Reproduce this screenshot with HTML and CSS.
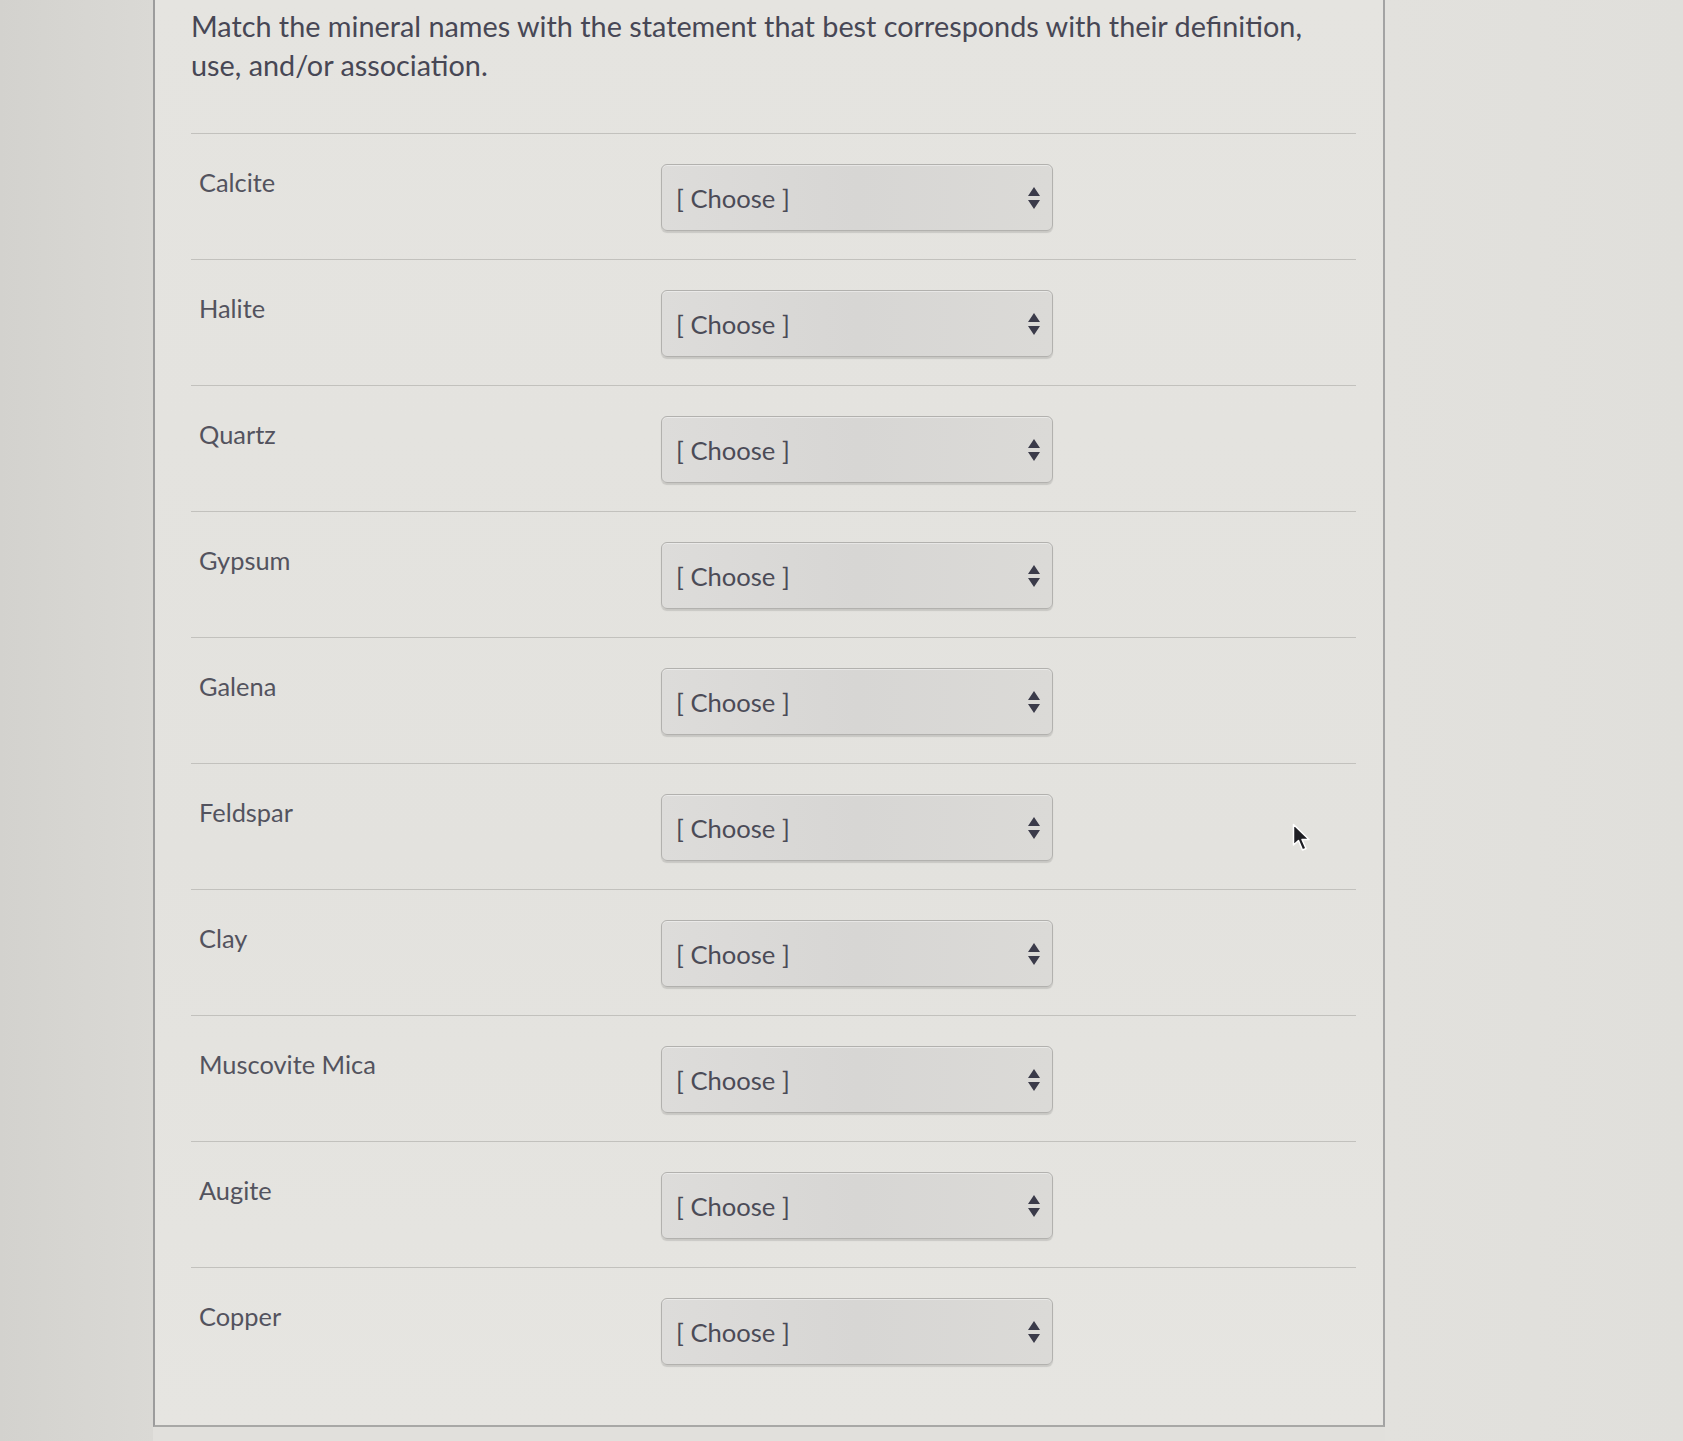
FILE: index.html
```html
<!DOCTYPE html>
<html lang="en">

<head>
    <meta charset="UTF-8">
    <meta name="viewport" content="width=device-width, initial-scale=1.0">
    <title>Matching Question</title>
    <link rel="stylesheet" href="styles.css">
</head>

<body>
    <div class="page">
        <div class="gutter"></div>

        <div class="question">
            <p class="question-text">Match the mineral names with the statement that best corresponds with their definition, use, and/or association.</p>

            <div class="answers">
                <div class="answer-row">
                    <div class="answer-label">Calcite</div>
                    <div class="choose">
                        <span>[ Choose ]</span>
                        <svg class="arrows" width="12" height="22" viewBox="0 0 12 22"><path d="M6 0 L12 9 L0 9 Z M0 13 L12 13 L6 22 Z" /></svg>
                    </div>
                </div>
                <div class="answer-row">
                    <div class="answer-label">Halite</div>
                    <div class="choose">
                        <span>[ Choose ]</span>
                        <svg class="arrows" width="12" height="22" viewBox="0 0 12 22"><path d="M6 0 L12 9 L0 9 Z M0 13 L12 13 L6 22 Z" /></svg>
                    </div>
                </div>
                <div class="answer-row">
                    <div class="answer-label">Quartz</div>
                    <div class="choose">
                        <span>[ Choose ]</span>
                        <svg class="arrows" width="12" height="22" viewBox="0 0 12 22"><path d="M6 0 L12 9 L0 9 Z M0 13 L12 13 L6 22 Z" /></svg>
                    </div>
                </div>
                <div class="answer-row">
                    <div class="answer-label">Gypsum</div>
                    <div class="choose">
                        <span>[ Choose ]</span>
                        <svg class="arrows" width="12" height="22" viewBox="0 0 12 22"><path d="M6 0 L12 9 L0 9 Z M0 13 L12 13 L6 22 Z" /></svg>
                    </div>
                </div>
                <div class="answer-row">
                    <div class="answer-label">Galena</div>
                    <div class="choose">
                        <span>[ Choose ]</span>
                        <svg class="arrows" width="12" height="22" viewBox="0 0 12 22"><path d="M6 0 L12 9 L0 9 Z M0 13 L12 13 L6 22 Z" /></svg>
                    </div>
                </div>
                <div class="answer-row">
                    <div class="answer-label">Feldspar</div>
                    <div class="choose">
                        <span>[ Choose ]</span>
                        <svg class="arrows" width="12" height="22" viewBox="0 0 12 22"><path d="M6 0 L12 9 L0 9 Z M0 13 L12 13 L6 22 Z" /></svg>
                    </div>
                </div>
                <div class="answer-row">
                    <div class="answer-label">Clay</div>
                    <div class="choose">
                        <span>[ Choose ]</span>
                        <svg class="arrows" width="12" height="22" viewBox="0 0 12 22"><path d="M6 0 L12 9 L0 9 Z M0 13 L12 13 L6 22 Z" /></svg>
                    </div>
                </div>
                <div class="answer-row">
                    <div class="answer-label">Muscovite Mica</div>
                    <div class="choose">
                        <span>[ Choose ]</span>
                        <svg class="arrows" width="12" height="22" viewBox="0 0 12 22"><path d="M6 0 L12 9 L0 9 Z M0 13 L12 13 L6 22 Z" /></svg>
                    </div>
                </div>
                <div class="answer-row">
                    <div class="answer-label">Augite</div>
                    <div class="choose">
                        <span>[ Choose ]</span>
                        <svg class="arrows" width="12" height="22" viewBox="0 0 12 22"><path d="M6 0 L12 9 L0 9 Z M0 13 L12 13 L6 22 Z" /></svg>
                    </div>
                </div>
                <div class="answer-row">
                    <div class="answer-label">Copper</div>
                    <div class="choose">
                        <span>[ Choose ]</span>
                        <svg class="arrows" width="12" height="22" viewBox="0 0 12 22"><path d="M6 0 L12 9 L0 9 Z M0 13 L12 13 L6 22 Z" /></svg>
                    </div>
                </div>
            </div>
        </div>

        <div class="outside"></div>
    </div>

    <!-- mouse pointer -->
    <svg class="pointer" width="20" height="30" viewBox="0 0 20 30">
        <path d="M1.5 1.5 L1.5 22 L6.5 17.5 L10.5 27 L14 25.5 L10 16.5 L17 16.5 Z" fill="#1f1f24" stroke="#ffffff" stroke-width="1.5" stroke-linejoin="round" />
    </svg>
</body>

</html>
```

FILE: styles.css
```css
body {
    margin: 0;
    background: #e1e0dc;
    font-family: Lato, "Open Sans", sans-serif;
    color: #4a4a56;
}

.page {
    display: flex;
    min-height: 1441px;
    align-items: flex-start;
}

.gutter {
    width: 153px;
    align-self: stretch;
    background: linear-gradient(90deg, #d3d2ce, #dad9d5);
}

.question {
    width: 1165px;
    padding: 7px 27px 32px 36px;
    border-left: 2px solid #9c9c9c;
    border-right: 2px solid #a3a3a3;
    border-bottom: 2px solid #a8a8a6;
    background: linear-gradient(180deg, #e5e4e0, #e3e2de 60%, #e6e5e1);
}

.question-text {
    max-width: 1135px;
    margin: 0 0 48px 0;
    font-size: 28.8px;
    line-height: 39px;
    color: #474755;
}

.answer-row {
    display: grid;
    grid-template-columns: 470px 392px;
    height: 125px;
    border-top: 1px solid #c2c1bd;
}

.answer-label {
    padding: 30px 0 0 8px;
    font-size: 25.4px;
    line-height: 36px;
    color: #53535e;
}

.choose {
    display: flex;
    align-items: center;
    justify-content: space-between;
    height: 65px;
    margin-top: 30px;
    padding: 0 12px 0 14px;
    border: 1px solid #b2b1ae;
    border-radius: 6px;
    background: linear-gradient(90deg, #dddcda, #d7d6d4 50%, #dbdad7);
    box-shadow: 0 2px 1px rgba(0, 0, 0, 0.12), inset 0 1px 0 rgba(255, 255, 255, 0.4);
    font-size: 25.6px;
    color: #4b4b57;
}

.arrows {
    fill: #3b3b4a;
}

.outside {
    flex: 1;
    align-self: stretch;
    background: linear-gradient(90deg, #e2e1dd, #e0dfdb);
}

.pointer {
    position: absolute;
    left: 1292px;
    top: 823px;
}
```
